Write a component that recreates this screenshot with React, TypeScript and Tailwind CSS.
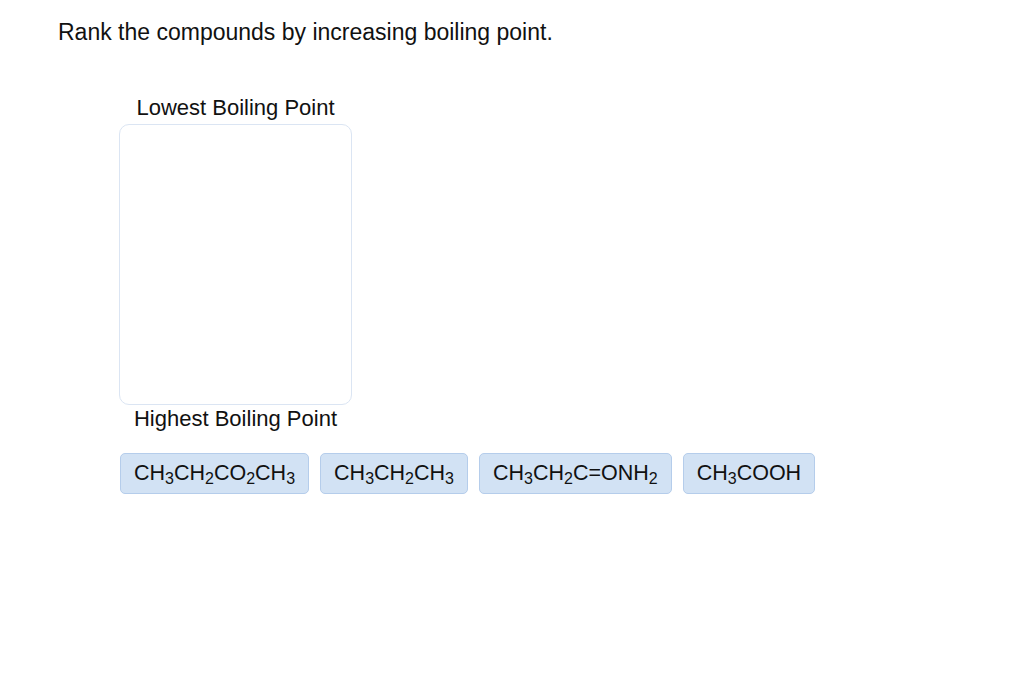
const COMPOUNDS: (string | [string])[][] = [
  ["CH", ["3"], "CH", ["2"], "CO", ["2"], "CH", ["3"]],
  ["CH", ["3"], "CH", ["2"], "CH", ["3"]],
  ["CH", ["3"], "CH", ["2"], "C=ONH", ["2"]],
  ["CH", ["3"], "COOH"],
];

function Formula({ parts }: { parts: (string | [string])[] }) {
  return (
    <span>
      {parts.map((p, i) =>
        typeof p === "string" ? (
          <span key={i}>{p}</span>
        ) : (
          <span key={i} className="relative top-[4px] text-[16px]">
            {p[0]}
          </span>
        )
      )}
    </span>
  );
}

export default function App() {
  return (
    <div
      className="w-[1024px] h-[694px] bg-white text-[#111] relative"
      style={{ fontFamily: '"Liberation Sans", Arial, sans-serif' }}
    >
      <div className="pl-[58px] pt-[17px]">
        <p className="text-[23px] leading-[30px]">Rank the compounds by increasing boiling point.</p>
      </div>

      <div className="pl-[119px] pt-[48px] w-[352px]">
        <div className="text-[22px] leading-[26px] text-center w-[233px] mb-[3px]">Lowest Boiling Point</div>
        <div className="w-[233px] h-[281px] border border-[#dbe5f3] rounded-[10px]"></div>
        <div className="text-[22px] leading-[26px] text-center w-[233px] mt-[1px]">Highest Boiling Point</div>
      </div>

      <div className="flex gap-[11px] pl-[120px] pt-[21px]">
        {COMPOUNDS.map((c, i) => (
          <div
            key={i}
            className="h-[41px] px-[13px] flex items-center bg-[#d2e2f4] border border-[#b5cdeb] rounded-[5px] text-[21.5px] leading-none"
          >
            <Formula parts={c} />
          </div>
        ))}
      </div>
    </div>
  );
}
